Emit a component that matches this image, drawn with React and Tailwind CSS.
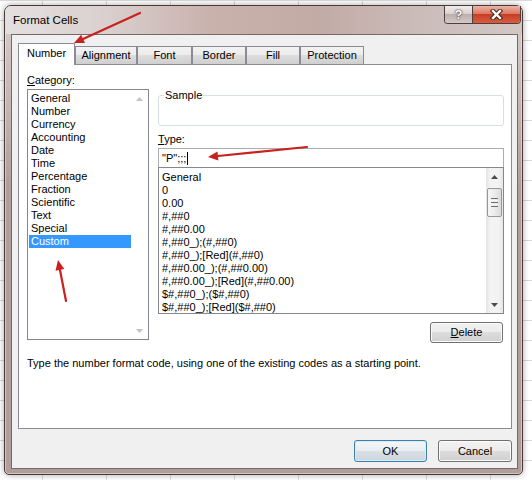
import React from "react";

const categories = [
  "General",
  "Number",
  "Currency",
  "Accounting",
  "Date",
  "Time",
  "Percentage",
  "Fraction",
  "Scientific",
  "Text",
  "Special",
  "Custom",
];

const formats = [
  "General",
  "0",
  "0.00",
  "#,##0",
  "#,##0.00",
  "#,##0_);(#,##0)",
  "#,##0_);[Red](#,##0)",
  "#,##0.00_);(#,##0.00)",
  "#,##0.00_);[Red](#,##0.00)",
  "$#,##0_);($#,##0)",
  "$#,##0_);[Red]($#,##0)",
];

const tabs = [
  { label: "Number", width: "w-[57px]", active: true },
  { label: "Alignment", width: "w-[62px]" },
  { label: "Font", width: "w-[55px]" },
  { label: "Border", width: "w-[54px]" },
  { label: "Fill", width: "w-[54px]" },
  { label: "Protection", width: "w-[64px]" },
];

function Arrow({ up, color = "#4d4d4d" }) {
  return (
    <svg width="7" height="4" viewBox="0 0 7 4">
      {up ? (
        <polygon points="3.5,0 7,4 0,4" fill={color} />
      ) : (
        <polygon points="0,0 7,0 3.5,4" fill={color} />
      )}
    </svg>
  );
}

function WinButton({ children, primary = false, width = "w-[73px]", height = "h-[22px]" }) {
  return (
    <button
      type="button"
      className={
        primary
          ? `${width} ${height} rounded-[3px] border border-[#3c7fb1] bg-[linear-gradient(to_bottom,#f4f7f9_0%,#e8edf0_50%,#d9e0e5_50%,#cdd6dc_100%)] shadow-[inset_0_0_0_1px_#d6ecf8] text-[11px] text-black`
          : `${width} ${height} rounded-[3px] border border-[#707070] bg-[linear-gradient(to_bottom,#f2f2f2_0%,#ebebeb_50%,#dddddd_50%,#cfcfcf_100%)] shadow-[inset_0_0_0_1px_#fbfbfb] text-[11px] text-black`
      }
    >
      {children}
    </button>
  );
}

export default function App() {
  return (
    <div className="relative h-[480px] w-[532px] overflow-hidden bg-white bg-[linear-gradient(to_right,#d9d9d9_1px,transparent_1px),linear-gradient(to_bottom,#d9d9d9_1px,transparent_1px)] bg-[size:64px_20px] bg-[position:42px_0px] pl-[4px] pt-[5px] font-['Liberation_Sans',Arial,sans-serif] text-[11px] text-black">
      {/* dialog window */}
      <div className="flex h-[470px] w-[519px] flex-col rounded-t-[7px] rounded-b-[5px] border border-[#4a3b39] bg-[linear-gradient(to_bottom,#d6cfce_0px,#c4b2af_110px,#b19e9a_180px,#b19e9a_100%)] shadow-[0_0_6px_rgba(0,0,0,0.35),inset_0_0_0_1px_rgba(255,255,255,0.4)]">
        {/* title bar */}
        <div className="flex h-[28px] rounded-t-[6px] bg-[linear-gradient(to_right,#e4e0e0_0%,#d9cfce_20%,#c9b1ac_40%,#c2aaa5_60%,#cbbcb9_80%,#d2c7c5_100%)]">
          <div className="self-center pl-[8px] text-[11.5px] leading-[15px]">Format Cells</div>
          <div className="ml-auto mr-[1px] flex h-[18px] self-start overflow-hidden rounded-b-[4px] border border-t-0 border-[#4e3f3d]">
            <div className="flex w-[27px] items-center justify-center bg-[linear-gradient(to_bottom,#f1eded_0%,#d8d1d0_45%,#bcb0ae_50%,#d3cac8_100%)] text-[13px] font-bold leading-none text-white [text-shadow:0_0_2px_#3a2c2a,0_0_1px_#3a2c2a]">
              ?
            </div>
            <div className="w-px bg-[#4e3f3d]" />
            <div className="flex w-[47px] items-center justify-center bg-[linear-gradient(to_bottom,#ecb4a7_0%,#dc7862_45%,#c63f25_50%,#d85c40_100%)]">
              <svg width="15" height="11" viewBox="0 0 15 11">
                <path d="M4 2 L11 9 M11 2 L4 9" stroke="#3d2a26" strokeWidth="4.4" strokeLinecap="square" />
                <path d="M4 2 L11 9 M11 2 L4 9" stroke="#ffffff" strokeWidth="2.4" strokeLinecap="square" />
              </svg>
            </div>
          </div>
        </div>

        {/* client area */}
        <div className="ml-[6px] mr-[4px] flex h-[435px] flex-col border border-[#776866] bg-[#f0f0f0]">
          {/* tabs */}
          <div className="ml-[6px] mt-[8px] flex h-[21px] items-end">
            {tabs.map((t) =>
              t.active ? (
                <div
                  key={t.label}
                  className={`${t.width} relative z-10 -mb-px flex h-[22px] items-center justify-center border border-b-0 border-[#898c95] bg-white pb-[2px]`}
                >
                  {t.label}
                </div>
              ) : (
                <div
                  key={t.label}
                  className={`${t.width} flex h-[18px] items-center justify-center border border-b-0 border-[#898c95] bg-[linear-gradient(to_bottom,#f3f3f3_0%,#ebebeb_50%,#dddddd_50%,#cfcfcf_100%)]`}
                >
                  {t.label}
                </div>
              )
            )}
          </div>

          {/* tab panel */}
          <div className="ml-[6px] flex h-[365px] w-[494px] flex-col border border-[#898c95] bg-white pt-[8px]">
            <div className="flex">
              {/* category column */}
              <div className="ml-[8px] w-[122px]">
                <div className="h-[15px] leading-[15px]">
                  <u className="underline-offset-[1px]">C</u>ategory:
                </div>
                <div className="mt-[1px] flex h-[251px] border border-[#828790] bg-white">
                  <div className="ml-[1px] w-[102px] pt-[2px]">
                    {categories.map((c) => (
                      <div
                        key={c}
                        className={
                          c === "Custom"
                            ? "h-[13px] bg-[#3399ff] pl-[2px] leading-[13px] text-white"
                            : "h-[13px] pl-[2px] leading-[13px]"
                        }
                      >
                        {c}
                      </div>
                    ))}
                  </div>
                  <div className="ml-auto flex w-[17px] flex-col justify-between">
                    <div className="flex h-[17px] items-center justify-center">
                      <Arrow up color="#c2c2c2" />
                    </div>
                    <div className="flex h-[17px] items-center justify-center">
                      <Arrow color="#c2c2c2" />
                    </div>
                  </div>
                </div>
              </div>

              {/* type column */}
              <div className="ml-[9px] flex w-[346px] flex-col">
                <fieldset className="mt-[15px] h-[38px] rounded-[3px] border border-[#d5dfe5]">
                  <legend className="ml-[5px] px-[1px] leading-[15px]">Sample</legend>
                </fieldset>
                <div className="mt-[6px] h-[15px] leading-[15px]">
                  <u className="underline-offset-[1px]">T</u>ype:
                </div>
                <div className="mt-[1px] flex h-[20px] items-center border border-[#abadb3] bg-white pl-[3px]">
                  <span className="leading-[13px]">"P";;;</span>
                  <span className="ml-[1px] h-[13px] w-px bg-black" />
                </div>
                <div className="-mt-px flex h-[147px] overflow-hidden border border-[#828790] bg-white">
                  <div className="flex-1 pl-[3px] pt-[3px]">
                    {formats.map((f) => (
                      <div key={f} className="h-[13px] whitespace-nowrap leading-[13px]">
                        {f}
                      </div>
                    ))}
                  </div>
                  <div className="flex w-[17px] flex-col bg-[linear-gradient(to_right,#e3e3e3,#f3f3f3_25%,#f3f3f3_75%,#e6e6e6)]">
                    <div className="flex h-[17px] items-center justify-center">
                      <Arrow up />
                    </div>
                    <div className="mx-[1px] mt-[3px] flex h-[29px] flex-col items-center justify-center gap-[1px] rounded-[2px] border border-[#979797] bg-[linear-gradient(to_right,#f6f6f6,#ececec_50%,#dadada)]">
                      <div className="h-px w-[7px] bg-[#6f6f6f]" />
                      <div className="h-px w-[7px] bg-[#f8f8f8]" />
                      <div className="h-px w-[7px] bg-[#6f6f6f]" />
                      <div className="h-px w-[7px] bg-[#f8f8f8]" />
                      <div className="h-px w-[7px] bg-[#6f6f6f]" />
                    </div>
                    <div className="mt-auto flex h-[17px] items-center justify-center">
                      <Arrow />
                    </div>
                  </div>
                </div>
                <div className="mr-[1px] mt-[8px] self-end">
                  <WinButton height="h-[21px]">
                    <u className="underline-offset-[1px]">D</u>elete
                  </WinButton>
                </div>
              </div>
            </div>

            <div className="ml-[8px] mt-[13px] leading-[15px]">
              Type the number format code, using one of the existing codes as a starting point.
            </div>
          </div>

          {/* dialog buttons */}
          <div className="mt-[11px] flex justify-end gap-[11px] pr-[5px]">
            <WinButton primary>OK</WinButton>
            <WinButton width="w-[74px]">Cancel</WinButton>
          </div>
        </div>
      </div>

      {/* annotation arrows */}
      <svg
        className="pointer-events-none absolute left-0 top-0"
        width="532"
        height="480"
        viewBox="0 0 532 480"
      >
        <g stroke="#c9211f" strokeWidth="2.2" strokeLinecap="round" fill="none">
          <line x1="140" y1="13" x2="83" y2="39" />
          <line x1="307" y1="147" x2="218" y2="156" />
          <line x1="66" y1="301" x2="60" y2="270" />
        </g>
        <g fill="#c9211f">
          <polygon points="74,43 85,43 81.2,34.8" />
          <polygon points="208,157 218.4,160.5 217.5,151.5" />
          <polygon points="58,260 64.3,269 55.5,270.7" />
        </g>
      </svg>
    </div>
  );
}
